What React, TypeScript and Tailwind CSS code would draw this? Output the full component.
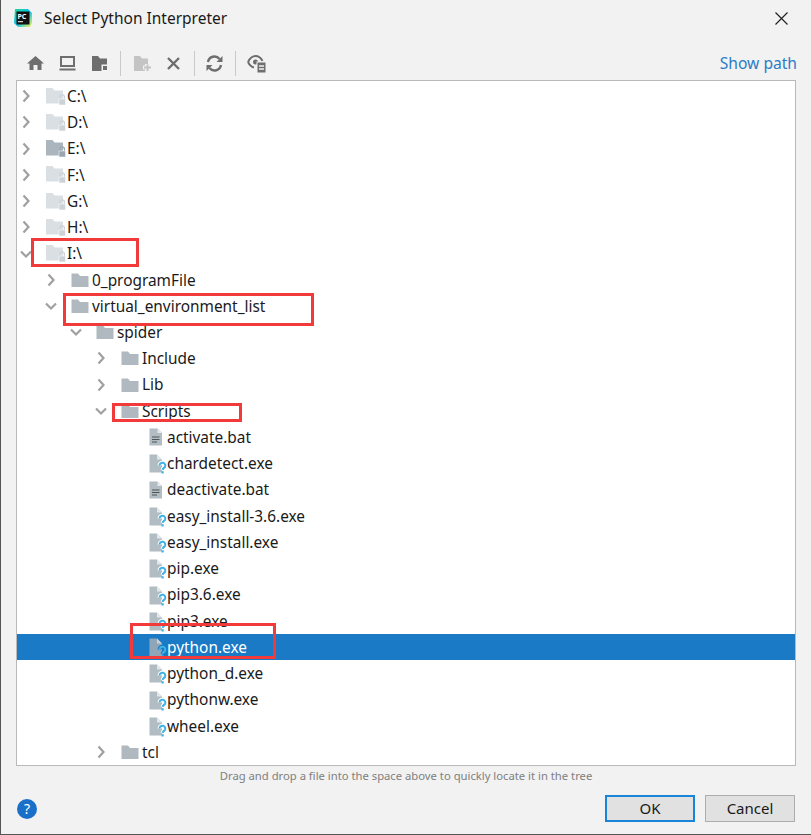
import React from "react";

const Chevron = ({ open }: { open?: boolean }) => (
  <svg width="14" height="14" viewBox="0 0 14 14" fill="none" stroke="#a0a0a0" strokeWidth="2.2" className="shrink-0">
    {open ? <path d="M2 4.5l5 5 5-5" /> : <path d="M4.5 1.5l5 5.5-5 5.5" />}
  </svg>
);

const Folder = ({ color = "#b0b9c0" }: { color?: string }) => (
  <svg width="18" height="16" viewBox="0 0 18 16" className="shrink-0">
    <path d="M0.5 1.5h6.5l2 2.5h8.500v11h-17z" fill={color} />
  </svg>
);

const LockFolder = ({ dark }: { dark?: boolean }) => (
  <svg width="20" height="19" viewBox="0 0 20 19" className="shrink-0">
    <path d="M0 1h6.500l2 2.500h8.500v13h-17z" fill={dark ? "#aab5bd" : "#d9dfe3"} />
    <path d="M14 12v-2a2.200 2.200 0 014.400 0v2" fill="none" stroke={dark ? "#9aa7b1" : "#ccd3d8"} strokeWidth="1.300" />
    <rect x="13" y="12" width="6.500" height="6" fill={dark ? "#9aa7b1" : "#ccd3d8"} stroke="#fff" strokeWidth="0.500" />
  </svg>
);

const BatFile = () => (
  <svg width="14" height="18" viewBox="0 0 14 18" className="shrink-0">
    <path d="M0.500 0.500h8l4.500 4.500v12.500h-12.500z" fill="#b2bcc3" />
    <path d="M8.500 0.500v4.500h4.500z" fill="#e4e8ea" />
    <path d="M3 9h7.500M3 11.500h7.500M3 14h5" stroke="#4e5558" strokeWidth="1.200" />
  </svg>
);

const UnknownFile = ({ selected }: { selected?: boolean }) => (
  <span className="relative w-[18px] h-[18px] shrink-0 block">
    <svg width="20" height="20" viewBox="0 0 20 20" className="block">
      <path d="M0.500 0.500h7.500l5 5v13h-12.500z" fill={selected ? "#8fa6b8" : "#b2bcc3"} />
      <path d="M8 0.500v5h5z" fill={selected ? "#c7d3dc" : "#e4e8ea"} />
      <path d="M10.500 11.500a2.900 2.900 0 115.600 1.200c-.6 1.200-2.300 1.500-2.500 3.200" fill="none" stroke={selected ? "#1a7ac5" : "#fff"} strokeWidth="4" />
      <path d="M10.500 11.500a2.900 2.900 0 115.600 1.200c-.6 1.200-2.300 1.500-2.500 3.200" fill="none" stroke="#3fb2e6" strokeWidth="2" />
      <rect x="12.500" y="17.200" width="2.200" height="2.300" fill="#3fb2e6" />
    </svg>
  </span>
);

type Row = { label: string; kind: "lock" | "lockDark" | "folder" | "bat" | "exe"; level: 0 | 1 | 2 | 3 | 4; chev?: "open" | "closed"; selected?: boolean };

const rows: Row[] = [
  { label: "C:\\", kind: "lock", level: 0, chev: "closed" },
  { label: "D:\\", kind: "lock", level: 0, chev: "closed" },
  { label: "E:\\", kind: "lockDark", level: 0, chev: "closed" },
  { label: "F:\\", kind: "lock", level: 0, chev: "closed" },
  { label: "G:\\", kind: "lock", level: 0, chev: "closed" },
  { label: "H:\\", kind: "lock", level: 0, chev: "closed" },
  { label: "I:\\", kind: "lock", level: 0, chev: "open" },
  { label: "0_programFile", kind: "folder", level: 1, chev: "closed" },
  { label: "virtual_environment_list", kind: "folder", level: 1, chev: "open" },
  { label: "spider", kind: "folder", level: 2, chev: "open" },
  { label: "Include", kind: "folder", level: 3, chev: "closed" },
  { label: "Lib", kind: "folder", level: 3, chev: "closed" },
  { label: "Scripts", kind: "folder", level: 3, chev: "open" },
  { label: "activate.bat", kind: "bat", level: 4 },
  { label: "chardetect.exe", kind: "exe", level: 4 },
  { label: "deactivate.bat", kind: "bat", level: 4 },
  { label: "easy_install-3.6.exe", kind: "exe", level: 4 },
  { label: "easy_install.exe", kind: "exe", level: 4 },
  { label: "pip.exe", kind: "exe", level: 4 },
  { label: "pip3.6.exe", kind: "exe", level: 4 },
  { label: "pip3.exe", kind: "exe", level: 4 },
  { label: "python.exe", kind: "exe", level: 4, selected: true },
  { label: "python_d.exe", kind: "exe", level: 4 },
  { label: "pythonw.exe", kind: "exe", level: 4 },
  { label: "wheel.exe", kind: "exe", level: 4 },
  { label: "tcl", kind: "folder", level: 3, chev: "closed" },
];

const indent: Record<number, string> = {
  0: "pl-0",
  1: "pl-[25px]",
  2: "pl-[50px]",
  3: "pl-[75px]",
  4: "pl-[100px]",
};

const TreeRow = ({ r }: { r: Row }) => (
  <div className={`h-[26.24px] flex items-center shrink-0 ${indent[r.level]} ${r.selected ? "bg-[#1a7ac5] text-white" : "text-[#1a1a1a]"}`}>
    <span className="w-[29px] h-[14px] flex shrink-0 pl-[1.500px]">{r.chev && <Chevron open={r.chev === "open"} />}</span>
    <span className={`${r.level === 4 ? "w-[21px] pl-[3px]" : "w-[21px]"} shrink-0 flex items-center`}>
      {r.kind === "lock" && <LockFolder />}
      {r.kind === "lockDark" && <LockFolder dark />}
      {r.kind === "folder" && <Folder />}
      {r.kind === "bat" && <BatFile />}
      {r.kind === "exe" && <UnknownFile selected={r.selected} />}
    </span>
    <span className="pt-[1px] text-[15.4px] leading-none whitespace-pre">{r.label}</span>
  </div>
);

const Sep = () => <div className="w-px h-[25px] bg-[#c9c9c9] shrink-0" />;

const Annotation = ({ cls }: { cls: string }) => <div className={`absolute border-[3px] border-[#f23a3a] pointer-events-none ${cls}`} />;

export default function App() {
  return (
    <div className="relative w-[811px] h-[835px] overflow-hidden bg-[#f2f2f2] flex flex-col border-l border-b border-[#555555] font-['Noto_Sans','Open_Sans',sans-serif]">
      {/* title bar */}
      <div className="h-[36px] shrink-0 flex items-center pl-[12px] pr-[23px]">
        <svg width="20" height="20" viewBox="0 0 20 20" className="shrink-0">
          <defs>
            <linearGradient id="pc" x1="0" y1="0" x2="1" y2="1">
              <stop offset="0" stopColor="#21d789" />
              <stop offset="0.5" stopColor="#07c3f2" />
              <stop offset="1" stopColor="#fcf84a" />
            </linearGradient>
          </defs>
          <path d="M2 1h13l4 4v10l-2 4H5l-4-4z" fill="url(#pc)" />
          <rect x="3.500" y="3.500" width="13" height="13" fill="#111" />
          <text x="4.500" y="10.500" fontSize="7" fontWeight="700" fill="#fff" fontFamily="Noto Sans">PC</text>
          <rect x="5" y="13.200" width="5" height="1" fill="#fff" />
        </svg>
        <span className="ml-[11px] pt-[2px] text-[15.5px] leading-none text-[#1a1a1a] whitespace-pre">Select Python Interpreter</span>
        <svg width="13" height="13" viewBox="0 0 13 13" className="ml-auto" stroke="#222" strokeWidth="1.200" fill="none">
          <path d="M0.500 0.500l12 12M12.500 0.500l-12 12" />
        </svg>
      </div>
      {/* toolbar */}
      <div className="h-[44px] shrink-0 flex items-center pl-[26px] pr-[14px] pt-[10px]">
        <svg width="17" height="14" viewBox="0 0 17 14" className="shrink-0" fill="#6e6e6e">
          <path d="M8.500 0L17 7.500h-2.500V14h-4V9h-4v5h-4V7.500H0z" />
        </svg>
        <svg width="17" height="15" viewBox="0 0 17 15" className="ml-[15px] shrink-0" fill="none" stroke="#6e6e6e">
          <rect x="2" y="1" width="13" height="9" strokeWidth="2" />
          <rect x="0.500" y="12.500" width="16" height="2" fill="#6e6e6e" strokeWidth="0" />
        </svg>
        <svg width="17" height="15" viewBox="0 0 17 15" className="ml-[16px] shrink-0">
          <path d="M0 0h6l2 2.500h7V15H0z" fill="#6e6e6e" />
          <rect x="9.500" y="8.500" width="7" height="6.500" fill="#f2f2f2" />
          <rect x="11" y="10" width="4" height="4" fill="#6e6e6e" />
        </svg>
        <div className="ml-[11px]"><Sep /></div>
        <svg width="17" height="15" viewBox="0 0 17 15" className="ml-[13px] shrink-0">
          <path d="M0 0h6l2 2.500h6V15H0z" fill="#c4c4c4" />
          <path d="M9 11.500h8M13 8v7" stroke="#f2f2f2" strokeWidth="4" />
          <path d="M10 11.500h7M13.500 8.500v6.500" stroke="#c4c4c4" strokeWidth="2" />
        </svg>
        <svg width="13" height="13" viewBox="0 0 13 13" className="ml-[16px] shrink-0" stroke="#6e6e6e" strokeWidth="2.400" fill="none">
          <path d="M1 1l11 11M12 1L1 12" />
        </svg>
        <div className="ml-[14px]"><Sep /></div>
        <svg width="17" height="17" viewBox="0 0 17 17" className="ml-[11px] shrink-0" fill="none" stroke="#6e6e6e" strokeWidth="2.400">
          <path d="M2 7a6.500 6.500 0 0111.500-3" />
          <path d="M15 10a6.500 6.500 0 01-11.500 3" />
          <path d="M16.500 1v6h-6z" fill="#6e6e6e" strokeWidth="0" />
          <path d="M0.500 16v-6h6z" fill="#6e6e6e" strokeWidth="0" />
        </svg>
        <div className="ml-[12px]"><Sep /></div>
        <svg width="20" height="19" viewBox="0 0 20 19" className="ml-[11px] shrink-0" fill="none">
          <path d="M1 8c2-4 4.500-6 7.500-6s5.500 2 7 5" stroke="#6e6e6e" strokeWidth="2" />
          <path d="M1 8c1.500 3 3.500 5 6 5.500" stroke="#6e6e6e" strokeWidth="2" />
          <circle cx="8.500" cy="8" r="2.500" fill="#6e6e6e" />
          <rect x="10" y="8" width="9" height="11" fill="#6e6e6e" stroke="#f2f2f2" />
          <path d="M12 12h5M12 15h5" stroke="#f2f2f2" strokeWidth="1.500" />
        </svg>
        <span className="ml-auto pt-[1px] text-[15.6px] leading-none text-[#2a7cc7] whitespace-pre">Show path</span>
      </div>
      {/* tree */}
      <div className="mx-[15px] h-[686px] shrink-0 border border-[#b9b9b9] bg-white overflow-hidden flex flex-col pt-[2px]">
        {rows.map((r) => (
          <TreeRow key={r.label} r={r} />
        ))}
      </div>
      {/* hint */}
      <div className="h-[20px] shrink-0 flex items-center justify-center text-[11.25px] leading-none text-[#808080] whitespace-pre">
        Drag and drop a file into the space above to quickly locate it in the tree
      </div>
      {/* footer */}
      <div className="flex-1 flex items-center pl-[16px] pr-[16px] pb-[4px]">
        <div className="w-[20px] h-[20px] mt-[2px] rounded-full bg-[#1a6fc9] text-white flex items-center justify-center text-[14px] leading-none">?</div>
        <button className="ml-auto w-[90px] h-[27px] bg-[#e1e1e1] border-2 border-[#1a84d8] text-[15px] leading-none text-[#1a1a1a]">OK</button>
        <button className="ml-[10px] w-[90px] h-[27px] bg-[#e1e1e1] border border-[#adadad] text-[15px] leading-none text-[#1a1a1a]">Cancel</button>
      </div>
      {/* annotation boxes drawn over the screenshot */}
      <Annotation cls="left-[30px] top-[238px] w-[108px] h-[29px]" />
      <Annotation cls="left-[62px] top-[293px] w-[251px] h-[33px]" />
      <Annotation cls="left-[111px] top-[403px] w-[130px] h-[19px]" />
      <Annotation cls="left-[129px] top-[623px] w-[146px] h-[36px]" />
    </div>
  );
}
